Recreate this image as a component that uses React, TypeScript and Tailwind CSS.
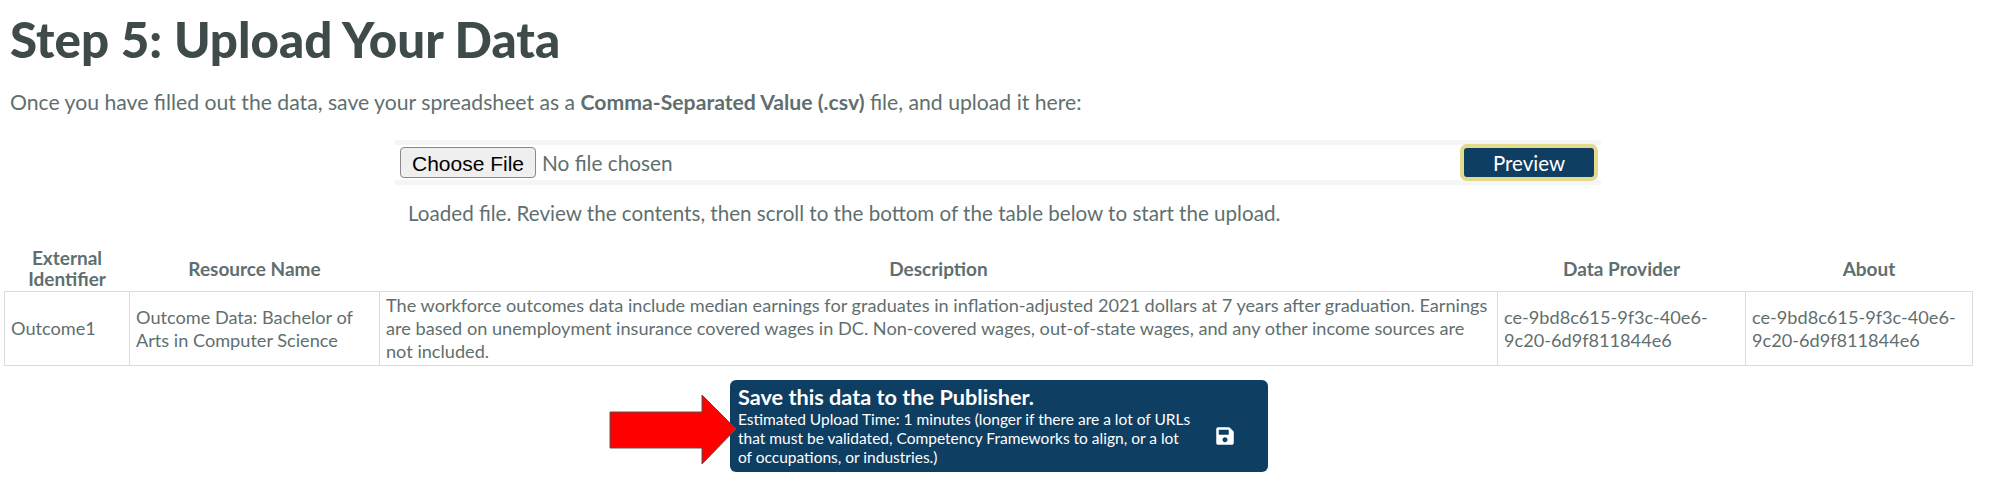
import { FaSave } from 'react-icons/fa';

const cellClass = 'border border-[#d5dddd] pl-[6px] pr-[8px] py-[2px] align-middle';
const headClass = 'px-[7px] pb-[2px] align-middle text-center text-[19px] font-bold text-[#5f6f6f]';
const providerId = 'ce-9bd8c615-9f3c-40e6-9c20-6d9f811844e6';

export default function App() {
  return (
    <div className="h-[489px] w-[1999px] overflow-hidden bg-white font-['Lato','Liberation_Sans',sans-serif] text-[#5f6f6f]">
      <h1 className="pl-[10px] pt-[14px] text-[49.3px] leading-[50px] font-black text-[#3f4a4a]">Step 5: Upload Your Data</h1>
      <p className="mt-[24px] pl-[10px] text-[21.2px] leading-[28px]">
        Once you have filled out the data, save your spreadsheet as a <b>Comma-Separated Value (.csv)</b> file, and upload it here:
      </p>

      <div className="ml-[395px] mt-[24px] flex h-[45px] w-[1206px] items-center justify-between rounded-[3px] border-y-[5px] border-[#f4f6f6] pl-[5px] pr-[3px]">
        <div className="flex items-center gap-[6px]">
          <button className="h-[31px] w-[136px] rounded-[4px] border border-[#8a8a8a] bg-[#efefef] font-['Liberation_Sans',sans-serif] text-[21px] text-black">
            Choose File
          </button>
          <span className="text-[20.8px]">No file chosen</span>
        </div>
        <button className="h-[37px] w-[138px] rounded-[7px] border-[4px] border-[#e2da8c] bg-[#0f3e63] text-[20.5px] text-white">
          Preview
        </button>
      </div>

      <p className="ml-[408px] mt-[14px] text-[20.6px] leading-[28px]">
        Loaded file. Review the contents, then scroll to the bottom of the table below to start the upload.
      </p>

      <table className="ml-[4px] mt-[20px] w-[1969px] table-fixed border-collapse text-[18.15px] leading-[23px]">
        <thead>
          <tr className="leading-[21px]">
            <th className={`${headClass} w-[125px]`}>External Identifier</th>
            <th className={`${headClass} w-[250px]`}>Resource Name</th>
            <th className={`${headClass} w-[1118px]`}>Description</th>
            <th className={`${headClass} w-[248px]`}>Data Provider</th>
            <th className={`${headClass} pl-[27px]`}>About</th>
          </tr>
        </thead>
        <tbody>
          <tr>
            <td className={cellClass}>Outcome1</td>
            <td className={cellClass}>Outcome Data: Bachelor of Arts in Computer Science</td>
            <td className={cellClass}>
              The workforce outcomes data include median earnings for graduates in inflation-adjusted 2021 dollars at 7 years after graduation. Earnings are based on unemployment insurance covered wages in DC. Non-covered wages, out-of-state wages, and any other income sources are not included.
            </td>
            <td className={cellClass}>{providerId}</td>
            <td className={cellClass}>{providerId}</td>
          </tr>
        </tbody>
      </table>

      <div className="relative ml-[730px] mt-[14px] w-[538px]">
        <button className="flex h-[92px] w-full items-center justify-between rounded-[6px] bg-[#0f3e63] pl-[8px] pr-[33px] text-left text-white">
          <span className="block w-[455px] text-[15.5px] leading-[19px]">
            <b className="block text-[21.7px] leading-[25px]">Save this data to the Publisher.</b>
            Estimated Upload Time: 1 minutes (longer if there are a lot of URLs that must be validated, Competency Frameworks to align, or a lot of occupations, or industries.)
          </span>
          <FaSave className="mt-[20px] size-[20px] shrink-0" />
        </button>
        <svg className="absolute left-[-121px] top-[14px]" width="128" height="71" viewBox="0 0 128 71">
          <path d="M1 18H93V1L127 35L93 70V54H1Z" fill="#ff0000" stroke="#555" strokeWidth="1" />
        </svg>
      </div>
    </div>
  );
}
